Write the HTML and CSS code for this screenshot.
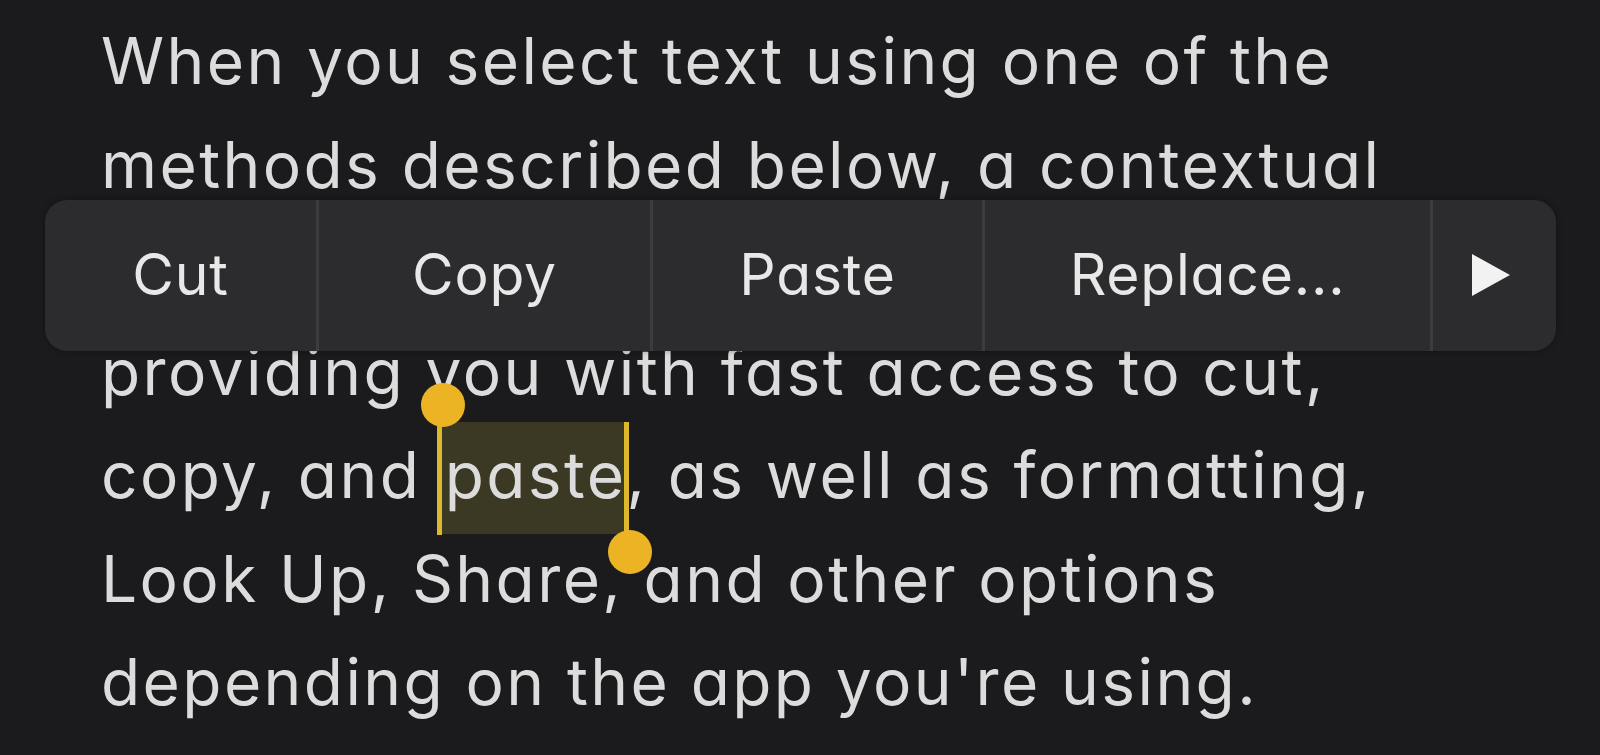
FILE: index.html
```html
<!DOCTYPE html>
<html lang="en">
<head>
<meta charset="utf-8">
<title>Text selection</title>
<link rel="stylesheet" href="styles.css">
</head>
<body>
<main class="page">
  <p class="body-text">When you select text using one of the<br>methods described below, a contextual<br>&nbsp;<br>providing you with fast access to cut,<br>copy, and <span class="sel">paste<span class="handle handle-start"></span><span class="handle handle-end"></span></span>, as well as formatting,<br>Look Up, Share, and other options<br>depending on the app you're using.</p>
  <nav class="menu">
    <div class="item item-cut">Cut</div>
    <div class="item item-copy">Copy</div>
    <div class="item item-paste">Paste</div>
    <div class="item item-replace">Replace...</div>
    <div class="item item-more"><span class="tri"></span></div>
  </nav>
</main>
</body>
</html>
```
FILE: styles.css
```css
html, body {
  margin: 0;
  padding: 0;
  background: #1b1b1d;
}
body {
  width: 1600px;
  height: 755px;
  overflow: hidden;
  font-family: Inter, "Liberation Sans", sans-serif;
  font-feature-settings: "cv11" 1;
}
.page {
  position: relative;
  width: 1600px;
  height: 755px;
}
.body-text {
  margin: 0;
  padding: 9px 0 0 101px;
  font-size: 64px;
  line-height: 103.5px;
  letter-spacing: 2.4px;
  color: #dcdcdc;
  white-space: nowrap;
}
.sel {
  position: relative;
  background: #3b3823;
  padding: 14px 0 21px 3px;
}
.handle {
  position: absolute;
  width: 5px;
  background: #dcb82c;
}
.handle::after {
  content: "";
  position: absolute;
  width: 44px;
  height: 44px;
  border-radius: 50%;
  background: #ecb425;
  left: -16px;
}
.handle-start {
  left: -5px;
  top: -17px;
  height: 130px;
}
.handle-start::after {
  top: -22px;
}
.handle-end {
  right: -3px;
  top: 0;
  height: 130px;
}
.handle-end::after {
  bottom: -22px;
}
.menu {
  position: absolute;
  left: 45px;
  top: 200px;
  width: 1511px;
  height: 151px;
  background: #2c2c2e;
  border-radius: 22px;
  display: grid;
  grid-template-columns: 271px 334px 332px 448px 1fr;
  overflow: hidden;
  box-shadow: 0 0 6px rgba(0, 0, 0, 0.35);
}
.item {
  display: flex;
  align-items: center;
  justify-content: center;
  font-size: 57px;
  letter-spacing: 0.8px;
  color: #e8e8e8;
  border-left: 3px solid #3c3c3e;
  padding-bottom: 2px;
}
.item-cut {
  border-left: 0;
}
.tri {
  width: 0;
  height: 0;
  border-top: 21px solid transparent;
  border-bottom: 21px solid transparent;
  border-left: 38px solid #f2f2f2;
  margin-left: -8px;
}
```
